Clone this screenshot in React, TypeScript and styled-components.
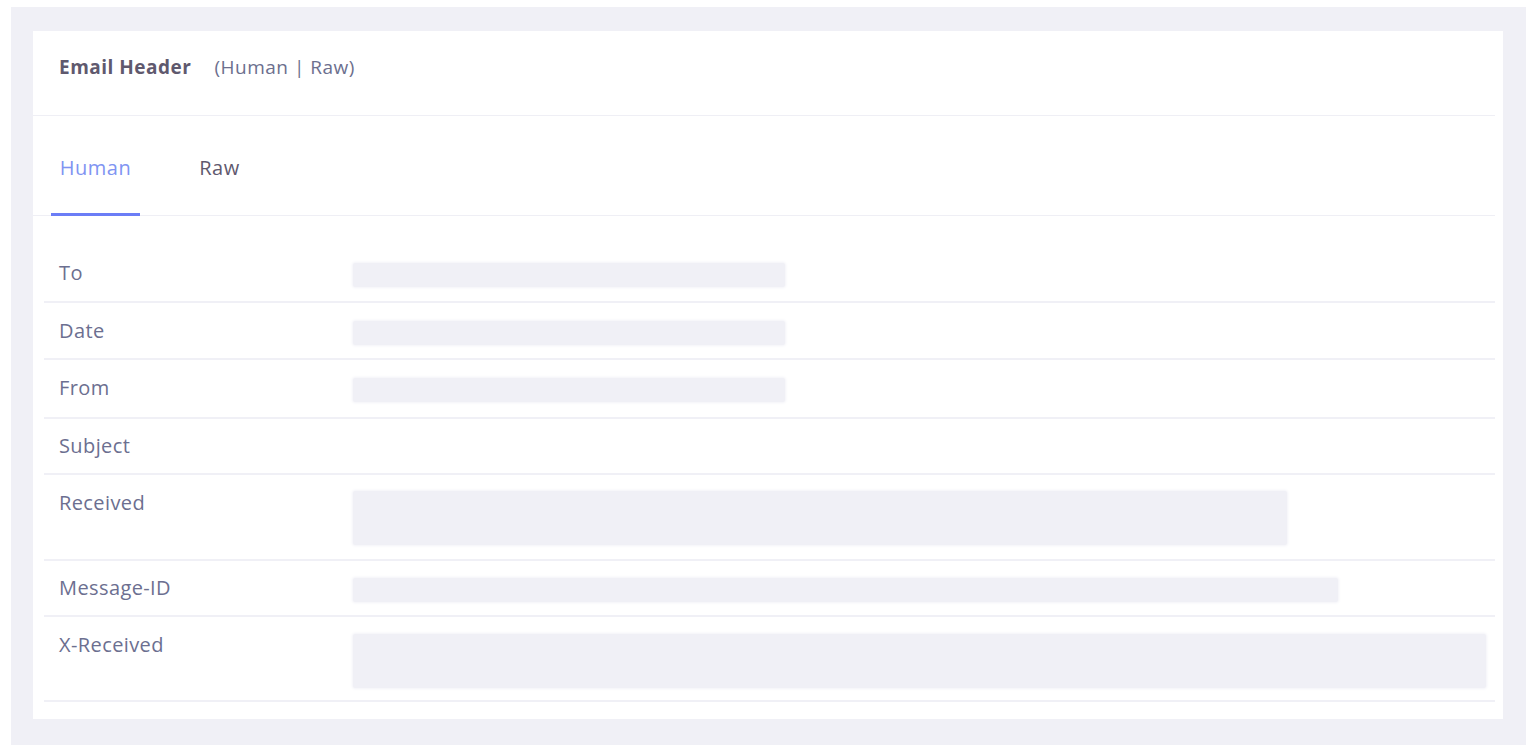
import React from "react";
import styled, { createGlobalStyle } from "styled-components";

const Global = createGlobalStyle`
  html, body { margin: 0; padding: 0; background: #ffffff; }
  body { font-family: "Open Sans", "Noto Sans", sans-serif; }
  * { box-sizing: border-box; }
`;

const Page = styled.div`
  padding: 7px 10px 6px 11px;
  width: 1536px;
  height: 751px;
`;

const Frame = styled.div`
  background: #f0f0f6;
  padding: 24px 23px 26px 22px;
  height: 738px;
`;

const Card = styled.div`
  background: #ffffff;
  height: 688px;
  padding-right: 8px;
  display: flex;
  flex-direction: column;
`;

const CardHeader = styled.div`
  height: 85px;
  display: flex;
  align-items: flex-start;
  gap: 23px;
  padding-left: 26px;
  padding-top: 24px;
  border-bottom: 1px solid #efeff5;
`;

const Title = styled.span`
  font-size: 19px;
  line-height: 24px;
  font-weight: 700;
  letter-spacing: 0.5px;
  color: #5f596e;
`;

const Subtitle = styled.span`
  font-size: 19px;
  line-height: 24px;
  color: #6c6f8e;
  letter-spacing: 0.5px;
`;

const TabBar = styled.div`
  height: 100px;
  display: flex;
  align-items: stretch;
  padding-left: 18px;
  gap: 35px;
  border-bottom: 1px solid #efeff5;
`;

const Tab = styled.div<{ $active?: boolean }>`
  position: relative;
  width: 89px;
  display: flex;
  align-items: center;
  justify-content: center;
  padding-top: 4px;
  font-size: 20px;
  letter-spacing: 0.5px;
  color: ${(p) => (p.$active ? "#8094f2" : "#5f596e")};
  &::after {
    content: "";
    display: ${(p) => (p.$active ? "block" : "none")};
    position: absolute;
    left: 0;
    right: 0;
    bottom: -1px;
    height: 3px;
    background: #6b7df6;
  }
`;

const Table = styled.div`
  padding: 28px 0 0 11px;
  display: flex;
  flex-direction: column;
`;

const Row = styled.div<{ $h: number }>`
  height: ${(p) => p.$h}px;
  display: grid;
  grid-template-columns: 309px 1fr;
  border-bottom: 2px solid #f0f0f6;
  align-items: start;
`;

const Label = styled.div<{ $top: number }>`
  padding-left: 15px;
  font-size: 20px;
  line-height: 24px;
  letter-spacing: 0.4px;
  color: #6c6f90;
  padding-top: ${(p) => p.$top}px;
`;

const ValueCell = styled.div<{ $top: number }>`
  padding-top: ${(p) => p.$top}px;
`;

const Blur = styled.div<{ $w: number; $h: number }>`
  width: ${(p) => p.$w}px;
  height: ${(p) => p.$h}px;
  background: #f0f0f6;
  border-radius: 2px;
  box-shadow: 0 0 3px 1px #f3f3f8;
`;

type RowDef = {
  label: string;
  h: number;
  lt: number;
  bt: number;
  box?: { w: number; h: number };
};

const rows: RowDef[] = [
  { label: "To", h: 59, lt: 17, bt: 19, box: { w: 432, h: 24 } },
  { label: "Date", h: 57, lt: 16, bt: 18, box: { w: 432, h: 24 } },
  { label: "From", h: 59, lt: 16, bt: 18, box: { w: 432, h: 24 } },
  { label: "Subject", h: 56, lt: 15, bt: 18 },
  { label: "Received", h: 86, lt: 16, bt: 16, box: { w: 934, h: 54 } },
  { label: "Message-ID", h: 56, lt: 15, bt: 17, box: { w: 985, h: 24 } },
  { label: "X-Received", h: 85, lt: 16, bt: 17, box: { w: 1133, h: 54 } },
];

export default function App() {
  return (
    <>
      <Global />
      <Page>
        <Frame>
          <Card>
            <CardHeader>
              <Title>Email Header</Title>
              <Subtitle>(Human | Raw)</Subtitle>
            </CardHeader>
            <TabBar>
              <Tab $active>Human</Tab>
              <Tab>Raw</Tab>
            </TabBar>
            <Table>
              {rows.map((r) => (
                <Row key={r.label} $h={r.h}>
                  <Label $top={r.lt}>{r.label}</Label>
                  <ValueCell $top={r.bt}>
                    {r.box && <Blur $w={r.box.w} $h={r.box.h} />}
                  </ValueCell>
                </Row>
              ))}
            </Table>
          </Card>
        </Frame>
      </Page>
    </>
  );
}
